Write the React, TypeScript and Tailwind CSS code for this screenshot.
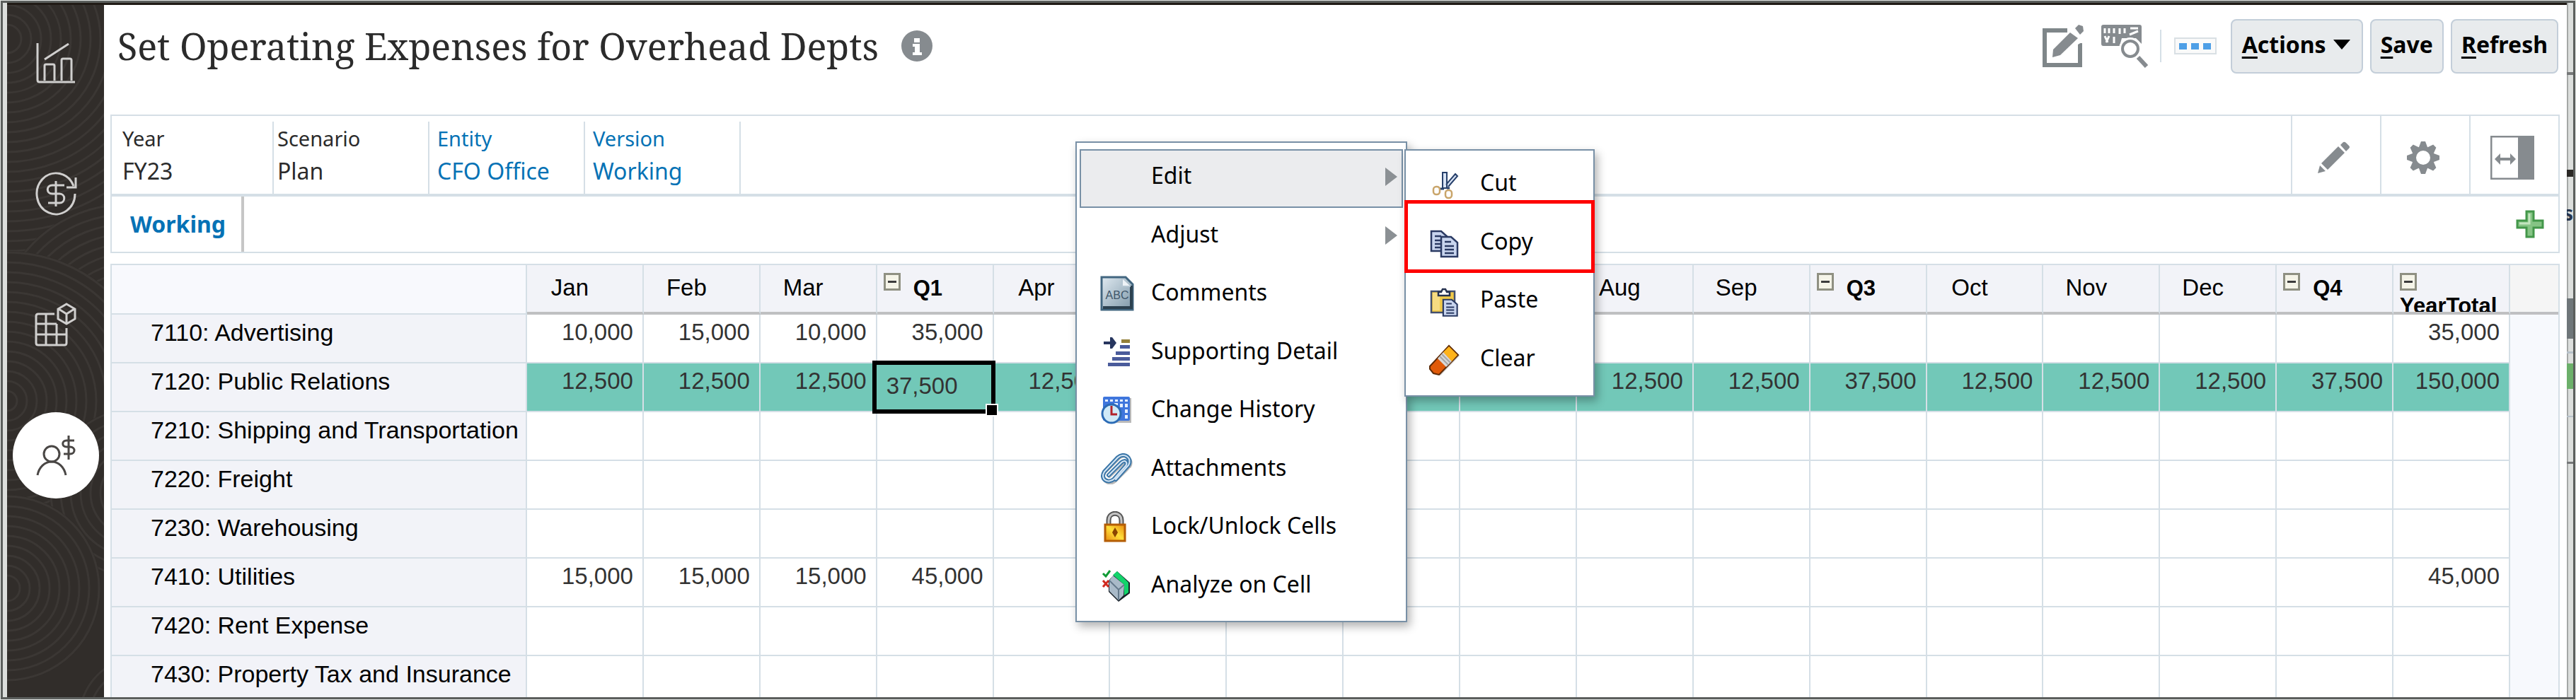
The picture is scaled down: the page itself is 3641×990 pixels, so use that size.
import type { ReactNode } from 'react'

const months = ['Jan', 'Feb', 'Mar', 'Q1', 'Apr', 'May', 'Jun', 'Q2', 'Jul', 'Aug', 'Sep', 'Q3', 'Oct', 'Nov', 'Dec', 'Q4', 'YearTotal']

const monthly = '12,500'
const quarterly = '37,500'

const rows: { name: string; values: Record<string, string>; highlight?: boolean }[] = [
  { name: '7110: Advertising', values: { Jan: '10,000', Feb: '15,000', Mar: '10,000', Q1: '35,000', YearTotal: '35,000' } },
  {
    name: '7120: Public Relations',
    highlight: true,
    values: {
      Jan: monthly, Feb: monthly, Mar: monthly, Q1: quarterly,
      Apr: monthly, May: monthly, Jun: monthly, Q2: quarterly,
      Jul: monthly, Aug: monthly, Sep: monthly, Q3: quarterly,
      Oct: monthly, Nov: monthly, Dec: monthly, Q4: quarterly,
      YearTotal: '150,000',
    },
  },
  { name: '7210: Shipping and Transportation', values: {} },
  { name: '7220: Freight', values: {} },
  { name: '7230: Warehousing', values: {} },
  { name: '7410: Utilities', values: { Jan: '15,000', Feb: '15,000', Mar: '15,000', Q1: '45,000', YearTotal: '45,000' } },
  { name: '7420: Rent Expense', values: {} },
  { name: '7430: Property Tax and Insurance', values: {} },
]

/* ---------- sidebar ---------- */

const ringGroups = [
  { cx: 0, cy: 48, max: 330 },
  { cx: 170, cy: 470, max: 190 },
  { cx: 0, cy: 560, max: 212 },
  { cx: 180, cy: 690, max: 120 },
  { cx: 0, cy: 825, max: 132 },
  { cx: 190, cy: 1010, max: 90 },
]

const Rings = () => (
  <svg className="absolute inset-0 h-full w-full" aria-hidden="true">
    {ringGroups.map((g) => (
      <g key={`${g.cx}-${g.cy}`} fill="none" stroke="#3b3734" strokeWidth="3">
        <circle cx={g.cx} cy={g.cy} r={g.max} fill="#312d2a" stroke="none" />
        {Array.from({ length: Math.floor(g.max / 14) }, (_, i) => (
          <circle key={i} cx={g.cx} cy={g.cy} r={g.max - i * 14 - 2} />
        ))}
      </g>
    ))}
  </svg>
)

const ChartIcon = () => (
  <svg width="60" height="60" viewBox="0 0 60 60" fill="none" stroke="#d0cfce" strokeWidth="3">
    <path d="M4 2v52q0 3 3 3h50M14 55V34q0-2 2-2h10q2 0 2 2v21M38 55V26q0-2 2-2h10q2 0 2 2v29M14 25L48 3" />
  </svg>
)

const DollarCycleIcon = () => (
  <svg width="60" height="62" viewBox="0 0 60 62" fill="none" stroke="#d0cfce" strokeWidth="3">
    <path d="M57 31A27 29 0 1 1 55 20M58 8v14H45" />
    <path d="M30 13v36M42 19H25c-9 0-9 12 0 12h10c9 0 9 13 0 13H19" />
  </svg>
)

const GridCubeIcon = () => (
  <svg width="60" height="62" viewBox="0 0 60 62" fill="none" stroke="#d0cfce" strokeWidth="3">
    <path d="M28 16H5q-3 0-3 3v38q0 3 3 3h37q3 0 3-3V36M2 30h29M2 45h43M16 16v44M31 30v30" />
    <path d="M45 2l12 7v14l-12 7-12-7V9zM34 9l11 7 11-7M45 16v13" />
  </svg>
)

const PersonDollarIcon = () => (
  <svg width="60" height="60" viewBox="0 0 60 60" fill="none" stroke="#4a4745" strokeWidth="3">
    <ellipse cx="24" cy="28" rx="11" ry="11" />
    <path d="M4 58c2-11 10-19 20-19s18 8 20 19" />
    <path d="M48 2v34M56 9H45c-7 0-7 9 0 9h5c8 0 8 10 0 10H41" />
  </svg>
)

const Sidebar = () => (
  <aside className="relative w-[137px] shrink-0 overflow-hidden bg-[#312d2a]">
    <Rings />
    <nav className="relative flex flex-col items-center gap-[63px] pt-[21px]">
      <SideLink label="Financials"><ChartIcon /></SideLink>
      <SideLink label="Revenue"><DollarCycleIcon /></SideLink>
      <SideLink label="Projects"><GridCubeIcon /></SideLink>
      <SideLink label="Expenses" active><PersonDollarIcon /></SideLink>
    </nav>
  </aside>
)

const SideLink = ({ label, active, children }: { label: string; active?: boolean; children: ReactNode }) => (
  <a
    href="#"
    aria-label={label}
    className={`flex h-[122px] w-[122px] items-center justify-center rounded-full ${active ? 'bg-white' : ''}`}
  >
    {children}
  </a>
)

/* ---------- header ---------- */

const InfoIcon = () => (
  <svg width="44" height="44" viewBox="0 0 44 44">
    <circle cx="22" cy="22" r="22" fill="#868b8f" />
    <path d="M18 11h8v6h-8zM16 19h10v12h3v4H16v-4h3v-8h-3z" fill="#fff" />
  </svg>
)

const ComposeIcon = () => (
  <svg width="60" height="60" viewBox="0 0 60 60">
    <path d="M35 8H3v49h50V26" fill="none" stroke="#7f8689" strokeWidth="6" />
    <path d="M36 0l24 0v22l-10 6z" fill="#fff" />
    <path d="M14 46l1-11 24-24 11 8-25 24z" fill="#868b8f" />
    <path d="M46 5l5-5 6 2 1 7-5 5z" fill="#868b8f" />
  </svg>
)

const InspectIcon = () => (
  <svg width="68" height="62" viewBox="0 0 68 62">
    <path d="M4 1h51q3 0 3 3v24l-8-8H30l-3 11H4q-3 0-3-3V4q0-3 3-3z" fill="#868b8f" />
    <path d="M6 6v7M12 6v7M19 6v7M27 6v8M34 6v7M6 17l4 9M12 17l-4 9M19 18v9M42 6h11M53 10l-12 5" stroke="#fff" strokeWidth="3" fill="none" />
    <circle cx="42" cy="35" r="16" fill="#fff" />
    <circle cx="42" cy="35" r="11" fill="none" stroke="#868b8f" strokeWidth="4" />
    <path d="M53 47l12 13" stroke="#868b8f" strokeWidth="6" />
  </svg>
)

const toolButton =
  'flex h-[77px] items-center rounded-lg border-2 border-[#c3ced9] bg-[#e8ebed] pb-1 text-[32px] font-bold text-black'

const Header = () => (
  <header className="flex h-[155px] items-start justify-between pt-[19px] pr-[2px] pl-[10px]">
    <div className="flex h-[78px] items-center gap-8">
      <h1 className="font-['Noto_Serif',serif] text-[52px] leading-[64px] text-[#2b2b2b]">
        Set Operating Expenses for Overhead Depts
      </h1>
      <button aria-label="Information"><InfoIcon /></button>
    </div>
    <div className="flex h-[78px] items-center">
      <button aria-label="Edit form"><ComposeIcon /></button>
      <button aria-label="Inspect" className="ml-[22px]"><InspectIcon /></button>
      <span className="ml-4 h-[46px] w-[2px] bg-[#d5dfe6]" />
      <button
        aria-label="More"
        className="ml-[18px] flex h-6 w-[60px] shrink-0 items-center justify-center gap-[6px] border-2 border-[#d9e0e4] bg-[#fafafa]"
      >
        <span className="h-[9px] w-[11px] bg-[#4e9fe6]" />
        <span className="h-[9px] w-[11px] bg-[#4e9fe6]" />
        <span className="h-[9px] w-[11px] bg-[#4e9fe6]" />
      </button>
      <button className={`${toolButton} ml-5 gap-[10px] pr-4 pl-[14px]`}>
        <span><u className="decoration-[3px] underline-offset-[5px]">A</u>ctions</span>
        <svg width="24" height="14" viewBox="0 0 24 14"><path d="M0 0h24L12 14z" /></svg>
      </button>
      <button className={`${toolButton} ml-[10px] px-[13px]`}>
        <span><u className="decoration-[3px] underline-offset-[5px]">S</u>ave</span>
      </button>
      <button className={`${toolButton} ml-[10px] px-[13px]`}>
        <span><u className="decoration-[3px] underline-offset-[5px]">R</u>efresh</span>
      </button>
    </div>
  </header>
)

/* ---------- point of view bar ---------- */

const PencilIcon = () => (
  <svg width="46" height="46" viewBox="0 0 46 46" fill="#868b8f">
    <path d="M0 45l3-11 8 8zM5 31L29 7l9 9-24 24zM32 5l4-4q2-1 4 1l4 4q2 2 0 4l-4 4z" />
  </svg>
)

const GearIcon = () => (
  <svg width="46" height="46" viewBox="0 0 46 46">
    <g fill="#868b8f">
      {[0, 45, 90, 135].map((a) => (
        <path key={a} d="M20 0h6l3 8v30l-3 8h-6l-3-8V8z" transform={`rotate(${a} 23 23)`} />
      ))}
      <circle cx="23" cy="23" r="16" />
    </g>
    <circle cx="23" cy="23" r="10" fill="#fff" />
  </svg>
)

const PanelIcon = () => (
  <svg width="62" height="62" viewBox="0 0 62 62">
    <path d="M1 1h60v60H1z" fill="#fff" stroke="#868b8f" strokeWidth="3" />
    <path d="M39 1h22v60H39z" fill="#868b8f" />
    <path d="M6 33l8-8v6h14v-6l8 8-8 8v-6H14v6z" fill="#868b8f" />
  </svg>
)

const PlusIcon = () => (
  <svg width="40" height="40" viewBox="0 0 40 40">
    <path d="M15 2h10v13h13v10H25v13H15V25H2V15h13z" fill="#86c485" stroke="#43974a" strokeWidth="3" />
    <path d="M19 5v14H5" stroke="#c3e5bf" strokeWidth="3" fill="none" />
  </svg>
)

const PovItem = ({ label, value, link, className }: { label: string; value: string; link?: boolean; className: string }) => {
  const body = (
    <>
      <span className="block text-[29px] leading-9">{label}</span>
      <span className="mt-2 block text-[32px] leading-10">{value}</span>
    </>
  )
  return (
    <div className={`border-r-2 border-[#d5dfe6] pt-[6px] ${className}`}>
      {link ? <a href="#" className="block text-[#0572b5]">{body}</a> : <div className="text-[#2b2b2b]">{body}</div>}
    </div>
  )
}

const povButton = 'flex w-[126px] items-center justify-center border-l-2 border-[#d5dfe6] pt-2 pr-[6px]'

const PovBar = () => (
  <section className="border-2 border-[#d5dfe6]">
    <div className="flex h-[114px] justify-between border-b-4 border-[#d5dfe6]">
      <div className="flex pt-2">
        <PovItem label="Year" value="FY23" className="w-[229px] pl-[15px]" />
        <PovItem label="Scenario" value="Plan" className="w-[220px] pl-[5px]" />
        <PovItem label="Entity" value="CFO Office" link className="w-[220px] pl-[11px]" />
        <PovItem label="Version" value="Working" link className="w-[220px] pl-[11px]" />
      </div>
      <div className="flex">
        <button aria-label="Edit" className={povButton}><PencilIcon /></button>
        <button aria-label="Settings" className={povButton}><GearIcon /></button>
        <button aria-label="Toggle panel" className={povButton}><PanelIcon /></button>
      </div>
    </div>
    <div className="flex h-[78px] items-stretch justify-between pr-5">
      <button className="border-r-4 border-[#c6c6c6] pr-[22px] pl-[26px] text-[32px] font-bold text-[#0572b5]">Working</button>
      <button aria-label="Add"><PlusIcon /></button>
    </div>
  </section>
)

/* ---------- grid ---------- */

const Collapse = ({ label }: { label: string }) => (
  <button
    aria-label={`Collapse ${label}`}
    className="flex h-[25px] w-6 shrink-0 items-center justify-center border-[3px] border-[#8f9082] bg-[#f5f4e8]"
  >
    <span className="h-[3px] w-3 bg-[#3c3c3c]" />
  </button>
)

const ColumnHeader = ({ name }: { name: string }) => {
  if (name === 'YearTotal') {
    return (
      <div className="h-[66px] overflow-hidden pt-[11px] pl-[9px] text-[31px] font-bold">
        <Collapse label={name} />
        <span className="mt-1 block leading-9">{name}</span>
      </div>
    )
  }
  if (name.startsWith('Q')) {
    return (
      <div className="flex h-[66px] gap-[18px] pt-[11px] pl-[9px] text-[31px] font-bold">
        <Collapse label={name} />
        <span className="pt-1 leading-9">{name}</span>
      </div>
    )
  }
  return <div className="h-[66px] pt-[14px] pr-[42px] text-center text-[33px] leading-9 font-normal">{name}</div>
}

const Grid = () => (
  <table className="mt-[15px] w-full table-fixed border-separate border-spacing-0 border-2 border-b-0 border-[#d5dfe6] font-['Liberation_Sans',Arial,sans-serif] text-[33px] leading-9">
    <colgroup>
      <col className="w-[587px]" />
      {months.map((m) => <col key={m} />)}
      <col className="w-[68px]" />
    </colgroup>
    <thead>
      <tr>
        <td className="border-r-2 border-b-2 border-[#d5dfe6] bg-[#f8f9fd]" />
        {months.map((m) => (
          <th key={m} scope="col" className="border-r-2 border-b-4 border-r-[#d5dfe6] border-b-[#bfc0c2] bg-[#f2f3f8] p-0 text-left align-top text-black">
            <ColumnHeader name={m} />
          </th>
        ))}
        <td className="border-b-4 border-[#bfc0c2] bg-[#f5f5f5]" />
      </tr>
    </thead>
    <tbody>
      {rows.map((row) => (
        <tr key={row.name} className="h-[69px]">
          <th
            scope="row"
            className="border-r-2 border-b-2 border-[#d5dfe6] bg-[#f2f3f8] pt-[7px] pl-[55px] text-left align-top text-[34px] font-normal whitespace-nowrap text-black"
          >
            {row.name}
          </th>
          {months.map((m) => {
            const selected = row.highlight && m === 'Q1'
            return (
              <td
                key={m}
                className={`relative border-r-2 border-b-2 border-[#d5dfe6] pt-[7px] pr-[13px] text-right align-top text-[#333] ${row.highlight ? 'bg-[#72c8b8]' : 'bg-white'}`}
              >
                {selected ? (
                  <div className="absolute -inset-1 -left-[7px] z-10 border-[6px] border-black bg-[#72c8b8] pt-3 pl-[14px] text-left">
                    {row.values[m]}
                    <span className="absolute -right-[10px] -bottom-[10px] h-[18px] w-[18px] border-2 border-white bg-black" />
                  </div>
                ) : (
                  row.values[m]
                )}
              </td>
            )
          })}
          <td className="bg-[#f7f9fd]" />
        </tr>
      ))}
    </tbody>
  </table>
)

/* ---------- context menu ---------- */

const CommentsIcon = () => (
  <svg width="48" height="50" viewBox="0 0 48 50">
    <defs>
      <linearGradient id="note" x1="0" y1="0" x2="1" y2="1">
        <stop offset="0" stopColor="#dfe9f0" />
        <stop offset="1" stopColor="#7d97a8" />
      </linearGradient>
    </defs>
    <path d="M2 2h34l10 10v36H2z" fill="url(#note)" stroke="#426680" strokeWidth="3" />
    <path d="M4 45h40V14" fill="none" stroke="#2c4150" strokeWidth="4" />
    <path d="M31 4v11h12" fill="#eef3f7" stroke="#b5c6d2" strokeWidth="2" />
    <text x="24" y="33" textAnchor="middle" fontSize="16" fontFamily="Liberation Sans" fill="#3f566a">ABC</text>
  </svg>
)

const DetailIcon = () => (
  <svg width="48" height="44" viewBox="0 0 48 44">
    <path d="M5 7h9V1h3l6 8-6 8h-3v-6H5z" fill="#27365f" />
    <path d="M30 4h12v5H30z" fill="#94803a" />
    <path d="M28 12h14v5H28zM22 21h20v5H22zM17 29h25v5H17zM11 37h31v5H11z" fill="#4a5b9b" />
  </svg>
)

const HistoryIcon = () => (
  <svg width="48" height="44" viewBox="0 0 48 44">
    <path d="M6 5h38v35H10z" fill="#b9b9b9" />
    <rect x="4" y="3" width="38" height="34" rx="2" fill="#3f76dd" />
    <path d="M7 7h4v3H7zM14 7h4v3h-4zM21 7h4v3h-4zM28 7h4v3h-4zM35 7h4v3h-4zM28 13h4v5h-4zM35 13h4v5h-4zM35 21h4v5h-4zM35 29h4v5h-4zM20 12h5v3h-5z" fill="#e6f0ff" />
    <circle cx="16" cy="27" r="13" fill="#cfeaf8" stroke="#2b6bb5" strokeWidth="3" />
    <path d="M16 16v12h8" fill="none" stroke="#b3232b" strokeWidth="3" />
  </svg>
)

const ClipIcon = () => (
  <svg width="48" height="44" viewBox="0 0 48 44" fill="none" strokeLinecap="round">
    <path d="M13 33L32 15c7-6 12 3 6 8L21 40c-9 7-21-2-14-13L27 7c9-7 21 2 15 12" stroke="#b9b9b9" strokeWidth="4" />
    <path d="M12 31L30 13c6-5 10 1 5 6L20 36c-8 8-21 1-14-10L25 6c9-8 21 1 15 11L22 37" stroke="#3a76a8" strokeWidth="6" />
    <path d="M12 31L30 13c6-5 10 1 5 6L20 36c-8 8-21 1-14-10L25 6c9-8 21 1 15 11L22 37" stroke="#d5e6f5" strokeWidth="2" />
  </svg>
)

const LockIcon = () => (
  <svg width="48" height="44" viewBox="0 0 48 44">
    <defs>
      <linearGradient id="brass" x1="0" y1="1" x2="1" y2="0">
        <stop offset="0" stopColor="#e88a0e" />
        <stop offset=".5" stopColor="#ffdf3a" />
        <stop offset="1" stopColor="#e88a0e" />
      </linearGradient>
    </defs>
    <path d="M12 19v-6C12 0 30 0 30 13v6" fill="none" stroke="#555" strokeWidth="7" />
    <path d="M12 19v-6C12 0 30 0 30 13v6" fill="none" stroke="#c4c4c4" strokeWidth="3" />
    <path d="M7 19h28v23H7z" fill="url(#brass)" stroke="#b45d05" strokeWidth="3" />
    <path d="M21 23l4 7-4 7-4-7z" fill="#8a4500" />
  </svg>
)

const AnalyzeIcon = () => (
  <svg width="48" height="48" viewBox="0 0 48 48">
    <path d="M24 4L42 20v15L26 47 12 33V17z" fill="#171f26" />
    <path d="M24 4l16 16v14l-6 4V23L18 9z" fill="#12d36a" />
    <path d="M18 10l16 13-1 15-7 7-13-13V17z" fill="#a9bac8" />
    <path d="M13 17l13 13 8-7M26 30v15" fill="none" stroke="#64798b" strokeWidth="2" />
    <path d="M4 7l4 4 6-8" fill="none" stroke="#109a35" strokeWidth="3" />
    <path d="M4 17l8 9M12 17l-8 9" stroke="#d02a20" strokeWidth="3" />
  </svg>
)

const CutIcon = () => (
  <svg width="44" height="40" viewBox="0 0 44 40" fill="none">
    <path d="M20 2h6v22h-6zM25 19L38 4l3 3-13 15" fill="#d9e4f5" stroke="#27406b" strokeWidth="2" />
    <path d="M22 25h-7M26 24h4" stroke="#27406b" strokeWidth="3" />
    <rect x="7" y="22" width="9" height="11" rx="4" stroke="#c9a56a" strokeWidth="2.5" />
    <rect x="24" y="27" width="9" height="11" rx="4" stroke="#c9a56a" strokeWidth="2.5" />
  </svg>
)

const Sheet = () => (
  <>
    <path d="M1 1h14l9 8v20H1z" fill="#c8d5ee" stroke="#2a3a63" strokeWidth="2.5" />
    <path d="M6 8h9M6 14h13M6 19h13M6 24h13" stroke="#2a3a63" strokeWidth="2.5" />
  </>
)

const CopyIcon = () => (
  <svg width="44" height="42" viewBox="0 0 44 42">
    <g transform="translate(3 2)"><Sheet /></g>
    <g transform="translate(17 10)"><Sheet /></g>
  </svg>
)

const PasteIcon = () => (
  <svg width="44" height="42" viewBox="0 0 44 42">
    <path d="M4 6h33v30H4z" fill="#f0c948" stroke="#43506e" strokeWidth="2.5" />
    <path d="M6 8h10v25H6z" fill="#f7dc82" />
    <path d="M14 12V7h4l2-4h4l2 4h4v5z" fill="#fff" stroke="#26324f" strokeWidth="2.5" />
    <g transform="translate(20 17) scale(.86 .82)"><Sheet /></g>
  </svg>
)

const EraserIcon = () => (
  <svg width="44" height="46" viewBox="0 0 44 46">
    <path d="M8 40L34 8l10 8-27 28z" fill="#c9c9c9" />
    <path d="M2 31L29 2l13 13-27 28-8-2-5-6z" fill="#e05a09" stroke="#5e2a05" strokeWidth="2" />
    <path d="M21 11l8-8 12 12-8 9z" fill="#ffb31a" />
    <path d="M13 20l8-9 12 13-8 8z" fill="#d8d8d8" />
    <path d="M16 17l12 12M19 14l12 12" stroke="#a5a5a5" strokeWidth="2" />
  </svg>
)

const menuItems: { label: string; icon?: ReactNode; submenu?: boolean; active?: boolean }[] = [
  { label: 'Edit', submenu: true, active: true },
  { label: 'Adjust', submenu: true },
  { label: 'Comments', icon: <CommentsIcon /> },
  { label: 'Supporting Detail', icon: <DetailIcon /> },
  { label: 'Change History', icon: <HistoryIcon /> },
  { label: 'Attachments', icon: <ClipIcon /> },
  { label: 'Lock/Unlock Cells', icon: <LockIcon /> },
  { label: 'Analyze on Cell', icon: <AnalyzeIcon /> },
]

const editItems = [
  { label: 'Cut', icon: <CutIcon /> },
  { label: 'Copy', icon: <CopyIcon />, marked: true },
  { label: 'Paste', icon: <PasteIcon /> },
  { label: 'Clear', icon: <EraserIcon /> },
]

const menuBox = 'absolute flex flex-col border-2 border-[#7890a6] bg-white shadow-[4px_6px_12px_rgba(0,0,0,0.3)]'

const ContextMenu = () => (
  <>
    <div role="menu" className={`${menuBox} top-[200px] left-[1520px] z-20 h-[680px] w-[469px] px-1 pt-[9px] pb-[7px]`}>
      {menuItems.map((item) => (
        <button
          key={item.label}
          role="menuitem"
          className={`flex flex-1 items-center border-2 pr-[6px] pb-1 pl-[27px] text-left text-[32px] text-black ${item.active ? 'border-[#7890a6] bg-[#ebecee]' : 'border-transparent'}`}
        >
          <span className="flex w-12 justify-center">{item.icon}</span>
          <span className="flex-1 pb-1 pl-6 whitespace-nowrap">{item.label}</span>
          {item.submenu && (
            <svg width="17" height="26" viewBox="0 0 17 26"><path d="M0 0l17 13L0 26z" fill="#8b9094" /></svg>
          )}
        </button>
      ))}
    </div>
    <div role="menu" className={`${menuBox} top-[211px] left-[1985px] z-30 h-[350px] w-[269px] py-2`}>
      {editItems.map((item) => (
        <button key={item.label} role="menuitem" className="relative flex flex-1 items-center pl-8 text-left text-[32px] text-black">
          {item.icon}
          <span className="pb-2 pl-[29px]">{item.label}</span>
          {item.marked && <span className="absolute -inset-x-[2px] -top-[21px] bottom-0 border-[5px] border-[#fe0000]" />}
        </button>
      ))}
    </div>
  </>
)

// Sliver of the window that sits behind this one.
const BackWindowEdge = () => (
  <svg className="h-full w-[9px] shrink-0 bg-[#dcdedc]" aria-hidden="true">
    <path d="M0 0h2v990H0z" fill="#a5a8a6" />
    <path d="M0 98h9v4H0zM0 649h9v3H0z" fill="#77797a" />
    <path d="M0 236h9v10H0z" fill="#2b2825" />
    <path d="M0 418h9v57H0z" fill="#6f7679" />
    <path d="M0 493h9v3H0zM0 584h9v2H0z" fill="#b8c2ca" />
    <path d="M0 510h9v36H0z" fill="#6cb06a" />
    <text x="-5" y="308" fontSize="28" fontWeight="700" fontFamily="Noto Sans" fill="#26344d">s</text>
  </svg>
)

const App = () => {
  return (
    <div className="relative h-screen overflow-hidden bg-[#e3e5e3] p-px font-['Noto_Sans','Open_Sans',sans-serif]">
      <div className="flex h-full overflow-hidden border-[3px] border-[#5b5e5c] bg-[#dcdedc] pl-[6px]">
        <div className="flex min-w-0 flex-1 border-t-[3px] border-[#211b16] bg-white">
          <Sidebar />
          <main className="min-w-0 flex-1 pr-[10px] pl-[9px]">
            <Header />
            <PovBar />
            <Grid />
          </main>
        </div>
        <BackWindowEdge />
      </div>
      <ContextMenu />
    </div>
  )
}

export default App
